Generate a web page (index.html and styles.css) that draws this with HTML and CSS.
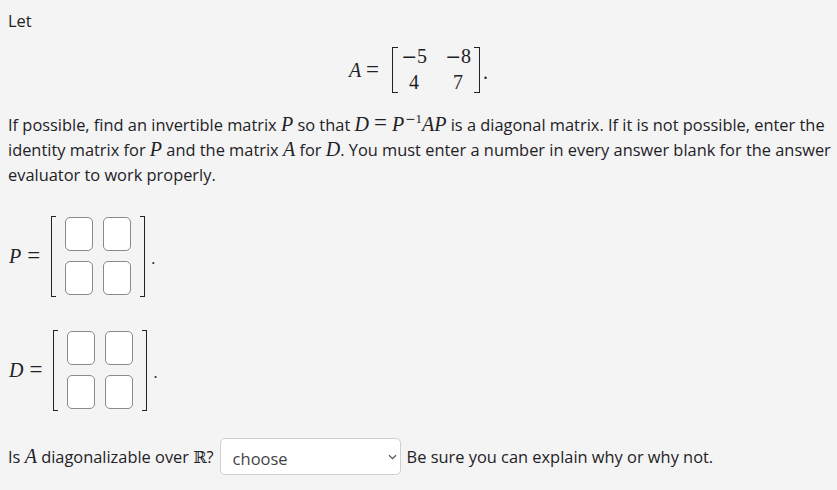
FILE: index.html
```html
<!DOCTYPE html>
<html lang="en">
<head>
<meta charset="utf-8">
<title>Diagonalization</title>
<link rel="stylesheet" href="styles.css">
</head>
<body>
<div class="problem">
  <p class="line">Let</p>
  <div class="display">
    <span class="mi">A</span><span class="mo">=</span>
    <span class="matrix">
      <span class="br br-l"></span>
      <span class="grid-a">
        <span class="cell"><span class="minus">−</span>5</span><span class="cell"><span class="minus">−</span>8</span>
        <span class="cell">4</span><span class="cell">7</span>
      </span>
      <span class="br br-r"></span>
    </span><span class="dot">.</span>
  </div>
  <p class="para">If possible, find an invertible matrix <span class="mi">P</span> so that <span class="mi">D</span><span class="mo">=</span><span class="mi">P</span><sup class="sup"><span class="minus">−</span>1</sup><span class="mi">AP</span> is a diagonal matrix. If it is not possible, enter the identity matrix for <span class="mi">P</span> and the matrix <span class="mi">A</span> for <span class="mi">D</span>. You must enter a number in every answer blank for the answer evaluator to work properly.</p>

  <div class="answer answer-p">
    <span class="mi">P</span><span class="mo">=</span>
    <span class="matrix big">
      <span class="br br-l"></span>
      <span class="grid-in">
        <input class="blank" type="text" aria-label="P11"><input class="blank" type="text" aria-label="P12">
        <input class="blank" type="text" aria-label="P21"><input class="blank" type="text" aria-label="P22">
      </span>
      <span class="br br-r"></span>
    </span><span class="dot small">.</span>
  </div>

  <div class="answer answer-d">
    <span class="mi">D</span><span class="mo">=</span>
    <span class="matrix big">
      <span class="br br-l"></span>
      <span class="grid-in">
        <input class="blank" type="text" aria-label="D11"><input class="blank" type="text" aria-label="D12">
        <input class="blank" type="text" aria-label="D21"><input class="blank" type="text" aria-label="D22">
      </span>
      <span class="br br-r"></span>
    </span><span class="dot small">.</span>
  </div>

  <div class="last">
    <span>Is <span class="mi">A</span> diagonalizable over <span class="bb">ℝ</span>?</span>
    <span class="select-wrap">
      <select class="select" aria-label="choose"><option>choose</option><option>Yes</option><option>No</option></select>
      <svg class="chev" width="9" height="6" viewBox="0 0 9 6"><path d="M1 1.2 L4.5 4.6 L8 1.2" fill="none" stroke="#555" stroke-width="1.2"/></svg>
    </span>
    <span>Be sure you can explain why or why not.</span>
  </div>
</div>
</body>
</html>
```

FILE: styles.css
```css
html, body {
  margin: 0;
  padding: 0;
  background: #f4f4f4;
}
body {
  padding: 8px;
  font-family: "Open Sans", "Noto Sans", sans-serif;
  font-size: 16.4px;
  line-height: 25px;
  color: #1e2226;
}
.problem {
  width: 832px;
}
.line {
  margin: 0;
}
.mi {
  font-family: "Liberation Serif", "DejaVu Serif", serif;
  font-style: italic;
  font-size: 20px;
  line-height: 1;
}
.mo {
  font-family: "Liberation Serif", "DejaVu Serif", serif;
  font-size: 23px;
  line-height: 1;
  margin: 0 5px;
  position: relative;
  top: -1px;
}
.minus {
  font-family: "DejaVu Serif", serif;
  font-weight: 300;
  font-size: 0.95em;
}
.sup {
  font-family: "Liberation Serif", serif;
  font-size: 13px;
  vertical-align: 0;
  position: relative;
  top: -8px;
  line-height: 0;
  margin-left: 1px;
}
.display {
  display: flex;
  justify-content: center;
  align-items: center;
  margin-top: 9px;
  height: 56px;
  width: 821px;
}
.matrix {
  display: inline-flex;
  align-items: stretch;
  margin-left: 8px;
}
.br {
  width: 5px;
  border: 1.5px solid #222;
}
.br-l { border-right: none; }
.br-r { border-left: none; }
.grid-a {
  display: grid;
  grid-template-columns: 30px 30px;
  column-gap: 14px;
  padding: 0 1px;
  font-family: "Liberation Serif", serif;
  font-size: 20px;
  line-height: 26px;
  height: 45px;
  margin-top: -4px;
}
.cell {
  text-align: center;
}
.display .matrix .br { height: 44px; }
.dot {
  font-family: "Liberation Serif", serif;
  font-size: 20px;
  align-self: center;
  margin-left: 3px;
  position: relative;
  top: 2px;
}
.para {
  margin: 14px 0 0 0;
}
.answer {
  display: flex;
  align-items: center;
  height: 82px;
}
.answer-p { margin-top: 28px; }
.answer-d { margin-top: 32px; }
.answer .mi { margin-left: 1px; }
.answer .mo { margin: 0 6px 0 6px; }
.matrix.big { margin-left: 5px; }
.matrix.big .br { height: 79px; width: 4px; }
.grid-in {
  display: grid;
  grid-template-columns: 28px 28px;
  grid-template-rows: 34px 34px;
  gap: 10px;
  padding: 0 9px;
  align-content: center;
}
.blank {
  box-sizing: border-box;
  width: 28px;
  height: 34px;
  margin: 0;
  padding: 0;
  border: 1px solid #8a8a8a;
  border-radius: 5px;
  background: #fff;
}
.dot.small {
  font-size: 16px;
  top: 2px;
  margin-left: 6px;
}
.last {
  display: flex;
  align-items: center;
  margin-top: 27px;
  gap: 6px;
}
.bb {
  font-family: "DejaVu Serif", serif;
  font-size: 16px;
}
.select-wrap {
  position: relative;
  display: inline-block;
  width: 181px;
  height: 37px;
}
.select {
  appearance: none;
  -webkit-appearance: none;
  box-sizing: border-box;
  width: 181px;
  height: 37px;
  border: 1px solid #cfcfcf;
  border-radius: 5px;
  background: #fff;
  padding: 4px 0 0 12px;
  font-family: "Open Sans", "Noto Sans", sans-serif;
  font-size: 16.5px;
  color: #444;
}
.chev {
  position: absolute;
  right: 4px;
  top: 16px;
  pointer-events: none;
}
```
